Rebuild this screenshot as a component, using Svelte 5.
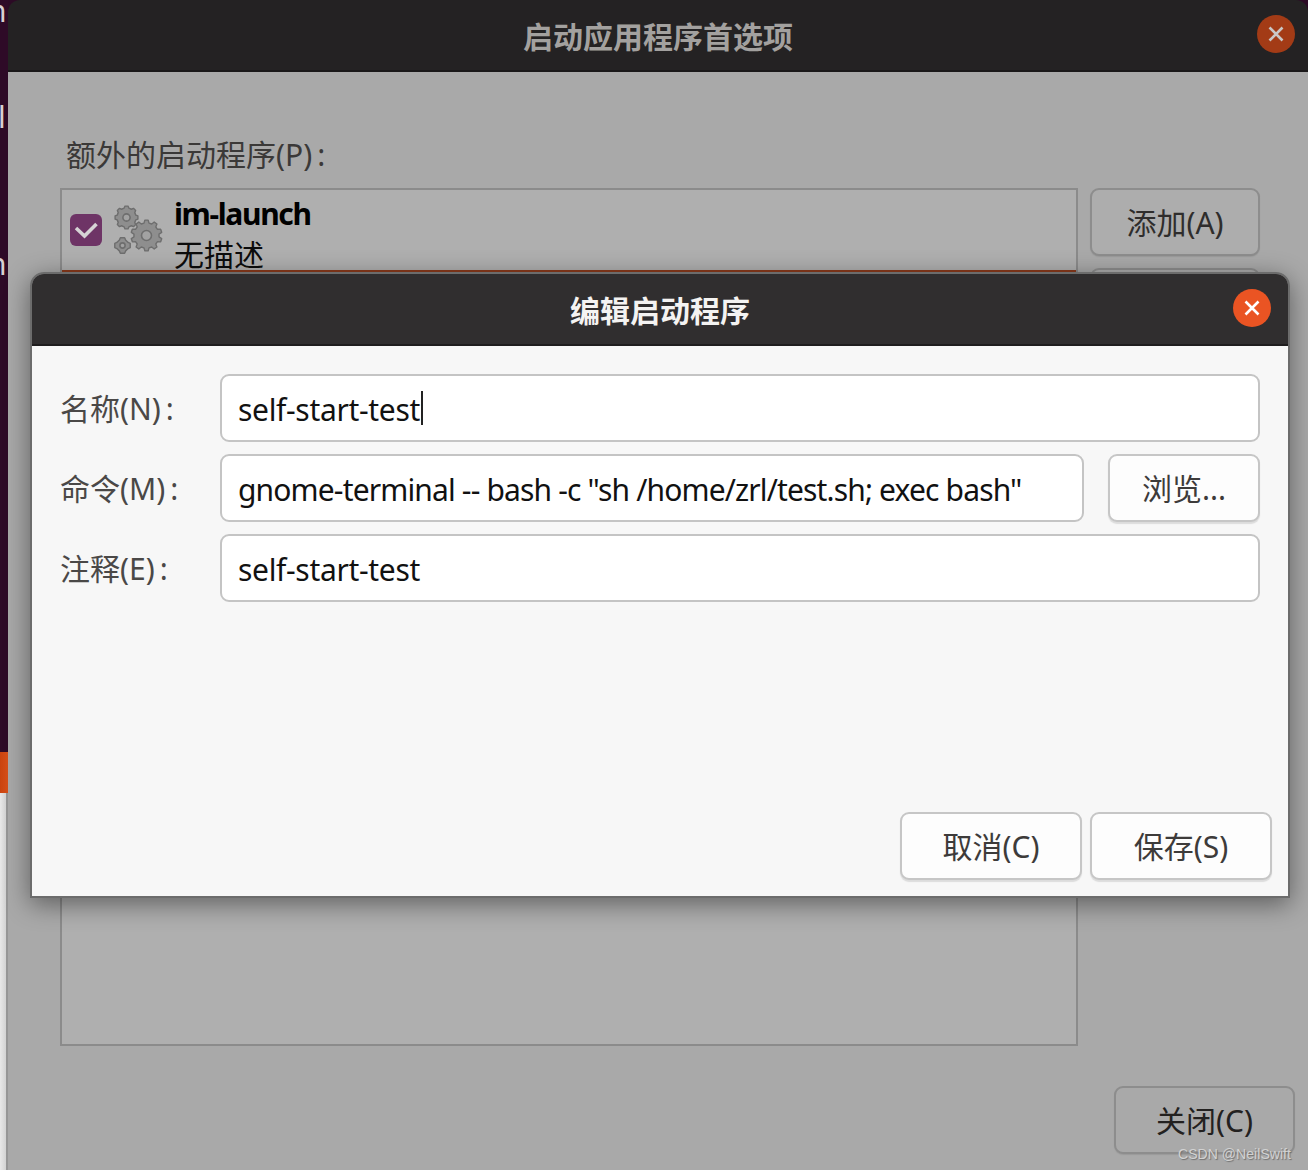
<script>
  const rows = [
    { label: '名称(N)', value: 'self-start-test', caret: true },
    { label: '命令(M)', value: 'gnome-terminal -- bash -c "sh /home/zrl/test.sh; exec bash"', browse: true },
    { label: '注释(E)', value: 'self-start-test' }
  ];

  function gear(cx, cy, outer, inner, hole, teeth) {
    const step = (Math.PI * 2) / teeth;
    let d = '';
    for (let i = 0; i < teeth; i++) {
      const a = i * step - Math.PI / 2;
      const pts = [
        [inner, a - step * 0.32],
        [outer, a - step * 0.17],
        [outer, a + step * 0.17],
        [inner, a + step * 0.32]
      ];
      for (const [r, t] of pts) {
        d += (d ? 'L' : 'M') + (cx + r * Math.cos(t)).toFixed(2) + ' ' + (cy + r * Math.sin(t)).toFixed(2);
      }
    }
    d += 'Z';
    return d;
  }
  const gears = [
    { x: 12.5, y: 12.5, o: 11.5, i: 9.6, h: 3.6, t: 8 },
    { x: 32.5, y: 30.5, o: 15.5, i: 12.6, h: 5, t: 10 },
    { x: 8.5, y: 40.5, o: 8, i: 6.4, h: 2.6, t: 4 }
  ];
</script>

<div class="page">
  <div class="strip">
    <div class="desk"></div>
    <div class="launcher"></div>
    <div class="pale"></div>
    <span class="ghost g1">n</span>
    <span class="ghost g2">l</span>
    <span class="ghost g3">n</span>
  </div>

  <div class="window">
    <header class="win-head">
      <span class="win-title">启动应用程序首选项</span>
      <span class="close dim">
        <svg viewBox="0 0 38 38" width="38" height="38"><path d="M12.5 12.5l13 13M25.5 12.5l-13 13" /></svg>
      </span>
    </header>
    <div class="win-body">
      <div class="win-label">额外的启动程序(P)<span class="colon">:</span></div>
      <div class="win-main">
        <div class="list">
          <div class="list-row">
            <span class="check">
              <svg viewBox="0 0 32 32" width="32" height="32"><path d="M6 14l8.5 8L26.500 10" /></svg>
            </span>
            <svg class="gears" viewBox="0 0 50 50" width="50" height="50">
              {#each gears as g}
                <path class="tooth" d={gear(g.x, g.y, g.o, g.i, g.h, g.t)} />
                <circle class="ring" cx={g.x} cy={g.y} r={g.h} />
              {/each}
            </svg>
            <div class="row-text">
              <div class="row-name">im-launch</div>
              <div class="row-desc">无描述</div>
            </div>
          </div>
          <div class="row-line"></div>
        </div>
        <div class="side">
          <div class="btn dark-btn">添加(A)</div>
          <div class="btn dark-btn">删除(R)</div>
        </div>
      </div>
      <div class="win-foot">
        <div class="btn dark-btn close-btn">关闭(C)</div>
      </div>
    </div>
  </div>

  <div class="dialog">
    <header class="dlg-head">
      <span class="dlg-title">编辑启动程序</span>
      <span class="close bright">
        <svg viewBox="0 0 38 38" width="38" height="38"><path d="M12.5 12.5l13 13M25.5 12.5l-13 13" /></svg>
      </span>
    </header>
    <div class="dlg-body">
      <div class="form">
        {#each rows as row}
          <div class="form-row">
            <div class="form-label">{row.label}<span class="colon">:</span></div>
            <div class="input" class:tight={row.browse}>{row.value}{#if row.caret}<span class="caret"></span>{/if}</div>
            {#if row.browse}<div class="btn light-btn browse">浏览...</div>{/if}
          </div>
        {/each}
      </div>
      <div class="actions">
        <div class="btn light-btn action">取消(C)</div>
        <div class="btn light-btn action">保存(S)</div>
      </div>
    </div>
  </div>

  <div class="mark">CSDN @NeilSwift</div>
</div>

<style>
  :global(body) {
    margin: 0;
    background: #a9a9a9;
  }
  .page {
    position: relative;
    display: flex;
    width: 1308px;
    height: 1170px;
    overflow: hidden;
    font-family: "Noto Sans", "Noto Sans CJK SC", sans-serif;
    font-size: 30px;
    line-height: 40px;
    background: #2c0a25;
  }
  .strip {
    position: relative;
    display: flex;
    flex-direction: column;
    flex: 0 0 8px;
    overflow: hidden;
  }
  .desk { height: 752px; background: #2e0a27; }
  .launcher { height: 41px; background: linear-gradient(90deg, #c9430f, #d8501a); }
  .pale { flex: 1; background: linear-gradient(90deg, #e8e8e8, #d4d4d4 70%, #969696 70%); }
  .ghost {
    position: absolute;
    color: #d8d0d4;
    font-size: 30px;
    line-height: 30px;
  }
  .g1 { left: -12px; top: -4px; }
  .g2 { left: -2px; top: 102px; }
  .g3 { left: -12px; top: 249px; }

  .colon { margin-left: 5px; }

  .window {
    flex: 1;
    display: flex;
    flex-direction: column;
    min-width: 0;
  }
  .win-head {
    position: relative;
    flex: 0 0 72px;
    box-sizing: border-box;
    display: flex;
    align-items: center;
    justify-content: center;
    padding-top: 4px;
    background: #242223;
    border-bottom: 2px solid #1a1819;
    border-radius: 12px 12px 0 0;
  }
  .win-title {
    font-weight: 700;
    color: #a3a19f;
  }
  .close {
    position: absolute;
    display: block;
    width: 38px;
    height: 38px;
    border-radius: 50%;
  }
  .close svg { display: block; }
  .close path { fill: none; stroke-width: 2.6; }
  .close.dim { right: 13px; top: 15px; background: #a33b16; }
  .close.dim path { stroke: #c9c7c6; }
  .close.bright { right: 17px; top: 15px; background: #ea5423; }
  .close.bright path { stroke: #fff; }

  .win-body {
    flex: 1;
    display: flex;
    flex-direction: column;
    box-sizing: border-box;
    padding: 63px 13px 16px 52px;
    background: #a9a9a9;
  }
  .win-label {
    height: 40px;
    margin: 0 0 13px 6px;
    color: #3b3938;
  }
  .win-main {
    flex: 0 0 858px;
    display: flex;
    align-items: flex-start;
    gap: 12px;
  }
  .list {
    flex: 0 0 1018px;
    box-sizing: border-box;
    height: 858px;
    background: #afafaf;
    border: 2px solid #8b8b8b;
  }
  .list-row {
    display: flex;
    align-items: center;
    height: 80px;
    padding-left: 8px;
    gap: 10px;
    overflow: hidden;
  }
  .check {
    flex: 0 0 32px;
    height: 32px;
    background: #6e3466;
    border-radius: 6px;
  }
  .check svg { display: block; }
  .check path { fill: none; stroke: #d6d3d5; stroke-width: 3.6; }
  .gears {
    flex: 0 0 50px;
    margin-left: 2px;
    filter: blur(0.4px);
  }
  .tooth { fill: #8e8e8e; stroke: #6e6e6e; stroke-width: 1.4; stroke-linejoin: round; }
  .ring { fill: #a2a2a2; stroke: #6e6e6e; stroke-width: 1.6; }
  .row-text {
    padding-top: 8px;
    color: #000;
  }
  .row-name { font-weight: 700; height: 42px; line-height: 42px; letter-spacing: -1.35px; }
  .row-desc { height: 40px; line-height: 40px; color: #0c0c0c; }
  .row-line {
    height: 2px;
    background: #8a3a1c;
  }
  .side {
    display: flex;
    flex-direction: column;
    gap: 12px;
    width: 170px;
  }
  .btn {
    display: flex;
    align-items: center;
    justify-content: center;
    box-sizing: border-box;
    padding-top: 2px;
    border-radius: 9px;
  }
  .dark-btn {
    height: 68px;
    background: #adadad;
    border: 2px solid #8d8d8d;
    color: #2f2d2c;
    box-shadow: 0 1px 1px #9a9a9a;
  }
  .win-foot {
    display: flex;
    justify-content: flex-end;
    margin-top: 40px;
  }
  .close-btn {
    width: 181px;
    background: #a9a9a9;
    color: #232120;
  }

  .dialog {
    position: absolute;
    left: 30px;
    top: 272px;
    width: 1260px;
    height: 626px;
    box-sizing: border-box;
    display: flex;
    flex-direction: column;
    border: 2px solid #6c6c6c;
    border-radius: 14px 14px 0 0;
    box-shadow: 0 6px 26px rgba(0, 0, 0, 0.45);
    overflow: hidden;
  }
  .dlg-head {
    position: relative;
    flex: 0 0 72px;
    box-sizing: border-box;
    display: flex;
    align-items: center;
    justify-content: center;
    padding-top: 4px;
    background: #302e2f;
    border-bottom: 2px solid #1f1d1e;
  }
  .dlg-title {
    font-weight: 700;
    color: #f4f3f2;
  }
  .dlg-body {
    flex: 1;
    display: flex;
    flex-direction: column;
    justify-content: space-between;
    box-sizing: border-box;
    padding: 28px 16px 16px 28px;
    background: #f7f7f7;
  }
  .form {
    display: flex;
    flex-direction: column;
    gap: 12px;
    padding-right: 12px;
  }
  .form-row {
    display: flex;
    align-items: center;
    gap: 24px;
  }
  .form-label {
    flex: 0 0 160px;
    margin-right: -24px;
    padding-top: 2px;
    color: #4a4847;
  }
  .input {
    flex: 1;
    display: flex;
    align-items: center;
    box-sizing: border-box;
    height: 68px;
    padding: 3px 0 0 16px;
    background: #fff;
    border: 2px solid #c4c4c4;
    border-radius: 9px;
    color: #111;
    white-space: nowrap;
    letter-spacing: -0.33px;
  }
  .input.tight {
    letter-spacing: -0.85px;
  }
  .caret {
    display: block;
    width: 2px;
    height: 34px;
    background: #222;
    margin: -3px 0 0 1px;
  }
  .light-btn {
    height: 68px;
    background: #fdfdfd;
    border: 2px solid #c6c6c6;
    color: #3d3b3a;
    box-shadow: 0 2px 1px #dcdcdc;
  }
  .browse { flex: 0 0 152px; }
  .actions {
    display: flex;
    justify-content: flex-end;
    gap: 8px;
  }
  .action { width: 182px; }
  .mark {
    position: absolute;
    left: 1178px;
    top: 1145px;
    font-family: "Liberation Sans", sans-serif;
    font-size: 14px;
    line-height: 18px;
    letter-spacing: 0.05px;
    color: #d2d2d2;
    text-shadow: 1px 1px 1px #707070;
    white-space: nowrap;
  }
</style>
